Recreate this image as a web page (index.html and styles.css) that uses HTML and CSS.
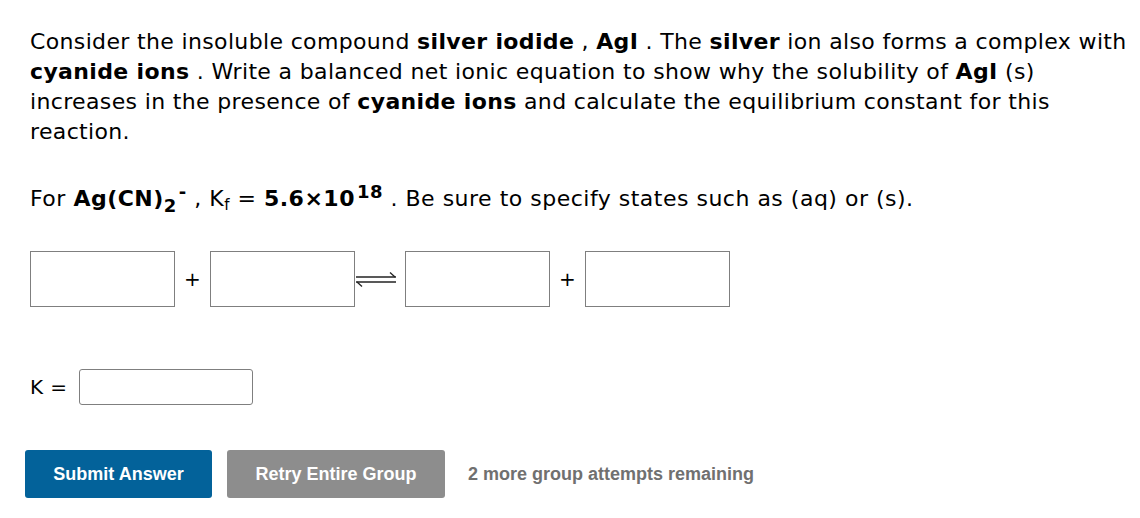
FILE: index.html
```html
<!DOCTYPE html>
<html>
<head>
<meta charset="utf-8">
<link rel="stylesheet" href="styles.css">
</head>
<body>
<div class="page">
  <p class="q">Consider the insoluble compound <b>silver iodide</b> , <b>AgI</b> . The <b>silver</b> ion also forms a complex with <b>cyanide ions</b> . Write a balanced net ionic equation to show why the solubility of <b>AgI</b> (s) increases in the presence of <b>cyanide ions</b> and calculate the equilibrium constant for this reaction.</p>
  <p class="q2">For <b>Ag(CN)<sub>2</sub><sup>-</sup></b> , K<sub class="f">f</sub> = <b>5.6×10<sup>18</sup></b> . Be sure to specify states such as (aq) or (s).</p>
  <div class="eq">
    <div class="box"></div>
    <span class="plus">+</span>
    <div class="box"></div>
    <svg class="arrow" width="42" height="20" viewBox="0 0 42 20">
      <line x1="1" y1="7" x2="41" y2="7" stroke="#222" stroke-width="1.5"/>
      <line x1="35" y1="2.5" x2="40" y2="7" stroke="#222" stroke-width="1.3"/>
      <line x1="1" y1="12" x2="41" y2="12" stroke="#222" stroke-width="1.5"/>
      <line x1="2" y1="12" x2="7" y2="16.5" stroke="#222" stroke-width="1.3"/>
    </svg>
    <div class="box box3"></div>
    <span class="plus">+</span>
    <div class="box"></div>
  </div>
  <div class="krow">
    <span class="klabel">K =</span>
    <div class="kbox"></div>
  </div>
  <div class="actions">
    <button class="btn submit">Submit Answer</button>
    <button class="btn retry">Retry Entire Group</button>
    <span class="remain">2 more group attempts remaining</span>
  </div>
</div>
</body>
</html>
```
FILE: styles.css
```css
html, body {
  margin: 0;
  padding: 0;
  background: #fff;
}
.page {
  padding: 27px 0 0 30px;
  font-family: "DejaVu Sans", Verdana, sans-serif;
  font-size: 22px;
  letter-spacing: 0.35px;
  color: #000;
}
.q {
  margin: 0;
  line-height: 30px;
  width: 1108px;
}
.q2 {
  margin: 37px 0 0 0;
  line-height: 30px;
  letter-spacing: 0.5px;
}
sub, sup {
  font-size: 18px;
  line-height: 0;
}
sub {
  vertical-align: -6px;
}
sup {
  vertical-align: 8px;
  margin-left: 2px;
}
sub.f {
  font-size: 15px;
  vertical-align: -4px;
}
.eq {
  display: flex;
  align-items: center;
  margin-top: 37px;
  height: 56px;
}
.box {
  width: 143px;
  height: 54px;
  border: 1px solid #7f7f7f;
  background: #fff;
}
.box3 {
  margin-left: 8px;
}
.plus {
  width: 35px;
  text-align: center;
  font-size: 20px;
}
.arrow {
  display: block;
  margin-top: 1px;
}
.krow {
  display: flex;
  align-items: center;
  margin-top: 61px;
  height: 37px;
}
.klabel {
  width: 49px;
  font-size: 20px;
}
.kbox {
  width: 172px;
  height: 34px;
  border: 1px solid #7f7f7f;
  border-radius: 3px;
}
.actions {
  display: flex;
  align-items: center;
  margin: 45px 0 0 -5px;
  letter-spacing: 0;
}
.btn {
  height: 48px;
  border: none;
  border-radius: 3px;
  color: #fff;
  font-family: "Liberation Sans", Arial, sans-serif;
  font-weight: bold;
  font-size: 18px;
  padding: 0;
}
.submit {
  width: 187px;
  background: #03629a;
}
.retry {
  width: 218px;
  margin-left: 15px;
  background: #8d8d8d;
}
.remain {
  margin-left: 23px;
  font-family: "Liberation Sans", Arial, sans-serif;
  font-weight: bold;
  font-size: 18px;
  color: #707070;
}
```
